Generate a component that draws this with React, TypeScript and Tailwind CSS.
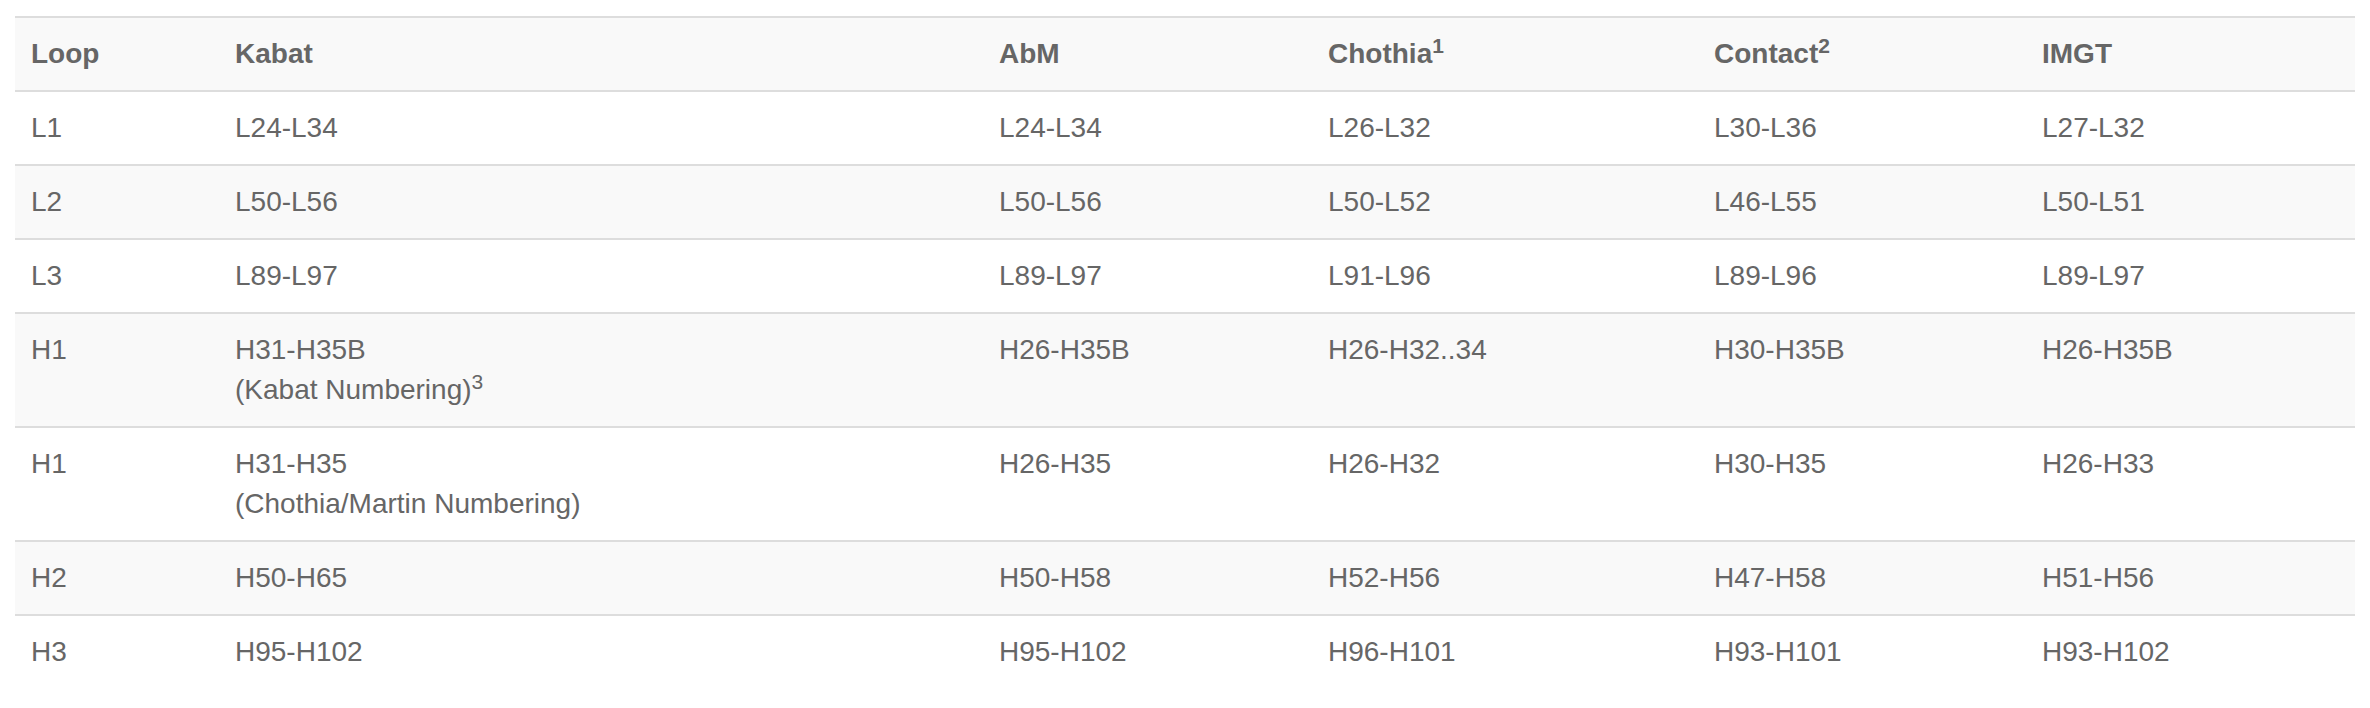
export default function App() {
  const rows: { loop: string; kabat: React.ReactNode; abm: string; chothia: string; contact: string; imgt: string }[] = [
    { loop: "L1", kabat: "L24-L34", abm: "L24-L34", chothia: "L26-L32", contact: "L30-L36", imgt: "L27-L32" },
    { loop: "L2", kabat: "L50-L56", abm: "L50-L56", chothia: "L50-L52", contact: "L46-L55", imgt: "L50-L51" },
    { loop: "L3", kabat: "L89-L97", abm: "L89-L97", chothia: "L91-L96", contact: "L89-L96", imgt: "L89-L97" },
    {
      loop: "H1",
      kabat: (
        <>
          H31-H35B
          <br />
          (Kabat Numbering)<sup>3</sup>
        </>
      ),
      abm: "H26-H35B",
      chothia: "H26-H32..34",
      contact: "H30-H35B",
      imgt: "H26-H35B",
    },
    {
      loop: "H1",
      kabat: (
        <>
          H31-H35
          <br />
          (Chothia/Martin Numbering)
        </>
      ),
      abm: "H26-H35",
      chothia: "H26-H32",
      contact: "H30-H35",
      imgt: "H26-H33",
    },
    { loop: "H2", kabat: "H50-H65", abm: "H50-H58", chothia: "H52-H56", contact: "H47-H58", imgt: "H51-H56" },
    { loop: "H3", kabat: "H95-H102", abm: "H95-H102", chothia: "H96-H101", contact: "H93-H101", imgt: "H93-H102" },
  ]

  const th = "border-t-2 border-[#ddd] px-4 py-4 text-left align-top font-bold"
  const td = "border-t-2 border-[#ddd] px-4 py-4 text-left align-top"

  return (
    <div
      className="w-[2370px] h-[708px] bg-white pt-4 pl-[15px] text-[#666] text-[28px] leading-[40px]"
      style={{ fontFamily: '"Liberation Sans", Arial, sans-serif' }}
    >
      <table className="w-[2340px] table-fixed">
        <colgroup>
          <col className="w-[204px]" />
          <col className="w-[764px]" />
          <col className="w-[329px]" />
          <col className="w-[386px]" />
          <col className="w-[328px]" />
          <col className="w-[329px]" />
        </colgroup>
        <thead>
          <tr className="bg-[#f9f9f9]">
            <th className={th}>Loop</th>
            <th className={th}>Kabat</th>
            <th className={th}>AbM</th>
            <th className={th}>
              Chothia<sup>1</sup>
            </th>
            <th className={th}>
              Contact<sup>2</sup>
            </th>
            <th className={th}>IMGT</th>
          </tr>
        </thead>
        <tbody>
          {rows.map((r, i) => (
            <tr key={i} className={i % 2 === 1 ? "bg-[#f9f9f9]" : "bg-white"}>
              <td className={td}>{r.loop}</td>
              <td className={td}>{r.kabat}</td>
              <td className={td}>{r.abm}</td>
              <td className={td}>{r.chothia}</td>
              <td className={td}>{r.contact}</td>
              <td className={td}>{r.imgt}</td>
            </tr>
          ))}
        </tbody>
      </table>
    </div>
  )
}
